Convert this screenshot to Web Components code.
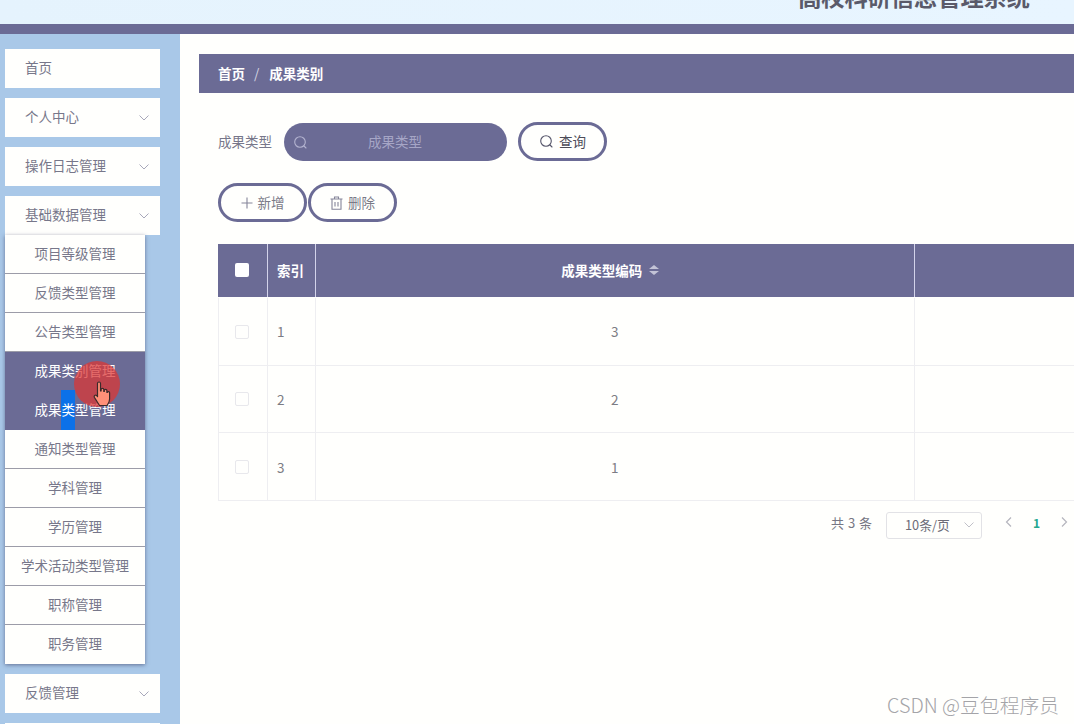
<!DOCTYPE html>
<html lang="zh"><head><meta charset="utf-8"><title>成果类别</title>
<style>
html,body{margin:0;padding:0;height:724px;overflow:hidden;background:#fffffd}
body{font:13.5px "Noto Sans CJK SC","Noto Sans",sans-serif;color:#77778a;position:relative;width:1074px}
</style></head><body>
<x-app>
  <x-top slot="top">高校科研信息管理系统</x-top>
  <x-side slot="side">
    <x-nav>首页</x-nav>
    <x-nav arrow>个人中心</x-nav>
    <x-nav arrow>操作日志管理</x-nav>
    <div>
      <x-nav arrow>基础数据管理</x-nav>
      <x-sub>
        <x-sub-row>项目等级管理</x-sub-row>
        <x-sub-row>反馈类型管理</x-sub-row>
        <x-sub-row>公告类型管理</x-sub-row>
        <x-sub-row active>成果类别管理</x-sub-row>
        <x-sub-row active>成果类型管理</x-sub-row>
        <x-sub-row>通知类型管理</x-sub-row>
        <x-sub-row>学科管理</x-sub-row>
        <x-sub-row>学历管理</x-sub-row>
        <x-sub-row>学术活动类型管理</x-sub-row>
        <x-sub-row>职称管理</x-sub-row>
        <x-sub-row>职务管理</x-sub-row>
      </x-sub>
    </div>
    <x-nav arrow>反馈管理</x-nav>
    <x-nav arrow></x-nav>
  </x-side>
  <x-main slot="main">
    <x-crumb><b>首页</b><i>/</i><b>成果类别</b></x-crumb>
    <x-search></x-search>
    <x-actions></x-actions>
    <x-grid></x-grid>
    <x-pager></x-pager>
  </x-main>
</x-app>
<x-mark>CSDN @豆包程序员</x-mark>
<script>
const FONT='"Noto Sans CJK SC","Noto Sans",sans-serif';
const PURPLE='#6b6b95';
const ICON={
 search:c=>`<svg width="15" height="15" viewBox="0 0 15 15" fill="none" stroke="${c}" stroke-width="1.1" stroke-linecap="round"><circle cx="7" cy="7" r="5.3"/><path d="M11 11l2 2"/></svg>`,
 plus:c=>`<svg width="12" height="12" viewBox="0 0 12 12" fill="none" stroke="${c}" stroke-width="1.1"><path d="M6 .5v11M.5 6h11"/></svg>`,
 trash:c=>`<svg width="13" height="14" viewBox="0 0 13 14" fill="none" stroke="${c}" stroke-width="1.1"><path d="M.5 3h12M4.5 3V1h4v2M2 3v10.3h9V3M5 6v4.5M8 6v4.5"/></svg>`,
 down:c=>`<svg width="10" height="6" viewBox="0 0 10 6" fill="none" stroke="${c}" stroke-width="1"><path d="M.5.5L5 5l4.500-4.500"/></svg>`
};
function def(name,css,html,init){
  customElements.define(name,class extends HTMLElement{
    connectedCallback(){
      if(this.shadowRoot)return;
      const r=this.attachShadow({mode:'open'});
      r.innerHTML=`<style>${css}</style>`+(typeof html==='function'?html(this):html);
      if(init)init(this,r);
    }
  });
}
def('x-app',`:host{display:grid;grid-template-columns:180px 1fr;grid-template-rows:48px 10px 1fr;margin-top:-24px;height:748px;overflow:hidden}
 .t{grid-column:1/3}.b{grid-column:1/3;background:${PURPLE}}`,
 `<div class="t"><slot name="top"></slot></div><div class="b"></div><slot name="side"></slot><slot name="main"></slot>`);
def('x-top',`:host{display:flex;justify-content:flex-end;align-items:center;height:48px;padding:0 44px 6px 0;box-sizing:border-box;background:linear-gradient(90deg,#e5f3fd,#e8f5ff);font:700 23.200px/1 ${FONT};color:#5a5a6a}`,`<slot></slot>`);
def('x-side',`:host{display:flex;flex-direction:column;gap:10px;padding:15px 0 0 5px;background:#a9c8e8;overflow:hidden;box-sizing:border-box;height:690px}`,`<slot></slot>`);
def('x-nav',`:host{display:flex;align-items:center;justify-content:space-between;width:155px;height:39px;box-sizing:border-box;padding:0 11px 0 20px;background:#fffffd;color:#77778a;flex:none}
 span{position:relative;top:-2px}svg{display:block}`,h=>`<span><slot></slot></span>`+(h.hasAttribute('arrow')?ICON.down('#a8a8ba'):''));
def('x-sub',`:host{display:block;position:relative;width:140px;box-shadow:0 1px 4px rgba(40,40,80,.55)}
 .dot{position:absolute;left:69px;top:126px;width:46px;height:46px;border-radius:50%;background:rgba(222,52,50,.72)}
 .rows{position:relative}
 .over{position:absolute;inset:0;pointer-events:none}
 svg{position:absolute;left:88px;top:146px}`,
 `<div class="rows"><slot></slot></div>
 <div class="over"><div class="dot"></div><svg width="18" height="26" viewBox="0 0 18 26"><path d="M4.500 2.500c0-2 3-2 3 0V10l.6 0V8.500c0-1.500 2.700-1.500 2.700 0V10.500h.5V9.500c0-1.500 2.600-1.500 2.600 0V11.500h.4c0-1.300 2.300-1.300 2.300.3V18c0 3-1.500 5-2.500 6.500H6.500C5 22 3 19 1.500 16.500c-1-1.800 1-3.300 2.200-1.800l.8 1z" fill="#ff9078" stroke="#3a2a2a" stroke-width="1.2" stroke-linejoin="round"/></svg></div>`);
def('x-sub-row',`:host{display:flex;align-items:center;justify-content:center;height:39px;box-sizing:border-box;background:#fffffd;color:#77778a;border-bottom:1px solid #9c9ca8;white-space:nowrap;position:relative;padding-bottom:1px}
 :host([active]){background:${PURPLE};color:#fff;border-bottom-color:${PURPLE}}
 :host(:last-child){border-bottom-color:#fffffd}
 .bar{position:absolute;left:56px;bottom:-1px;width:14px;height:40px;background:#0c71e8}
 span{position:relative;top:-1px}`,
 h=>(h.textContent==='成果类型管理'?'<div class="bar"></div>':'')+`<span><slot></slot></span>`);
def('x-main',`:host{display:block;background:#fffffd;padding:20px 0 0 19px;box-sizing:border-box;height:690px;overflow:hidden}`,`<slot></slot>`);
def('x-crumb',`:host{display:flex;align-items:center;height:39px;padding:0 0 2px 19px;box-sizing:border-box;background:${PURPLE};color:#fff;margin:0 -20px 0 0}
 ::slotted(b){font-weight:700}
 ::slotted(i){font-style:normal;margin:0 10px 0 9px;color:#d4d4e2}`,`<slot></slot>`);
customElements.define('x-btn',class extends HTMLElement{
  connectedCallback(){ if(this.shadowRoot)return;
    const r=this.attachShadow({mode:'open'});
    r.innerHTML=`<style>:host{display:inline-flex;align-items:center;justify-content:center;gap:5px;width:89px;height:39px;box-sizing:border-box;border:3px solid ${PURPLE};border-radius:20px;background:#fffffd;color:${this.getAttribute('color')||'#7a7a88'};font-size:13.5px}span{position:relative;top:-1px}svg{display:block}</style>`+ICON[this.getAttribute('icon')](this.getAttribute('icolor')||'#85859a')+`<span><slot></slot></span>`;
  }
});
def('x-search',`:host{display:flex;align-items:center;height:39px;margin:29px 0 0 19px;color:#77778a}
 .l{width:66px;position:relative;top:-1px}
 .p{display:flex;align-items:center;width:223px;height:38px;margin:1px 11px 0 0;border-radius:19px;background:${PURPLE};position:relative;color:#a6a6c6}
 .p svg{margin-left:9px;display:block}
 .p span{position:absolute;left:84px;top:8px}`,
 `<span class="l">成果类型</span><div class="p">${ICON.search('#b4b4d0')}<span>成果类型</span></div><x-btn icon="search" color="#4c4c58" icolor="#55556a">查询</x-btn>`);
def('x-actions',`:host{display:flex;gap:1px;margin:22px 0 0 19px}`,`<x-btn icon="plus">新增</x-btn><x-btn icon="trash">删除</x-btn>`);
def('x-grid',`:host{display:block;margin:22px 0 0 19px;width:1000px}
 .r{display:grid;grid-template-columns:49.500px 48px 599.500px 1fr}
 .h{background:${PURPLE};color:#fff;font-weight:700;height:53px;margin-bottom:1px}
 .h>div{border-right:1px solid #d3d3ea}
 .h>div:last-child{border:0}
 .d{height:67.670px;border-bottom:1px solid #eeeef1;box-sizing:border-box;color:#7c7c84}
 .d>div{border-right:1px solid #eeeef1}
 .d>div:first-child{border-left:1px solid #eeeef1}
 .d>div:last-child{border:0}
 .c{display:flex;align-items:center;justify-content:center;box-sizing:border-box}
 .h .c{padding-bottom:1px}
 .h .k{padding-right:9px}
 .i{justify-content:flex-start;padding-left:9.500px}
 .cb{width:14px;height:14px;border-radius:2px;background:#fff;display:block}
 .d .cb{box-sizing:border-box;background:#fffffd;border:1.500px solid #e8e8ec;margin:1px 0 0 -2px}
 .s{display:inline-flex;flex-direction:column;gap:2px;margin-left:7px}
 .s i{width:0;height:0;border:5px solid transparent;border-top-width:0;border-bottom:4px solid #c3c3d6;display:block}
 .s i+i{border-bottom-width:0;border-top:4px solid #c3c3d6}`,
 `<div class="r h"><div class="c"><span class="cb"></span></div><div class="c i">索引</div><div class="c k">成果类型编码<span class="s"><i></i><i></i></span></div><div class="c"></div></div>`+
 ['3','2','1'].map((v,n)=>`<div class="r d"><div class="c"><span class="cb"></span></div><div class="c i">${n+1}</div><div class="c">${v}</div><div class="c"></div></div>`).join(''));
def('x-pager',`:host{display:flex;align-items:center;margin:11px 0 0 19px;padding-left:613px;height:27px;color:#777784;white-space:nowrap;width:300px}
 .t{width:55px;word-spacing:1px;position:relative;top:-3px;font-size:13px}
 .sel{display:flex;align-items:center;justify-content:space-between;box-sizing:border-box;width:96px;height:27px;padding:0 7px 0 18px;border:1px solid #e2e2e6;border-radius:3px;color:#6c6c78;margin-right:23px;font-size:12.800px}
 .sel span{position:relative;top:-1px}
 .a{width:7px;display:flex;position:relative;top:-3px}
 .n{width:9px;text-align:center;color:#24a78f;font-weight:700;font-size:12px;margin:0 20px;position:relative;top:-3px}
 svg{display:block}`,
 `<span class="t">共 3 条</span><div class="sel"><span>10条/页</span>${ICON.down('#c0c0c8')}</div>
 <span class="a"><svg width="7" height="10" viewBox="0 0 7 10" fill="none" stroke="#b5b5bd" stroke-width="1.200"><path d="M6 .5L1.500 5 6 9.500"/></svg></span><span class="n">1</span>
 <span class="a"><svg width="7" height="10" viewBox="0 0 7 10" fill="none" stroke="#b5b5bd" stroke-width="1.200"><path d="M1 .5L5.500 5 1 9.500"/></svg></span>`);
def('x-mark',`:host{position:absolute;right:15px;top:690px;font:300 19.800px/30px ${FONT};color:#a4a4a8;white-space:nowrap}`,`<slot></slot>`);
</script>
</body></html>
